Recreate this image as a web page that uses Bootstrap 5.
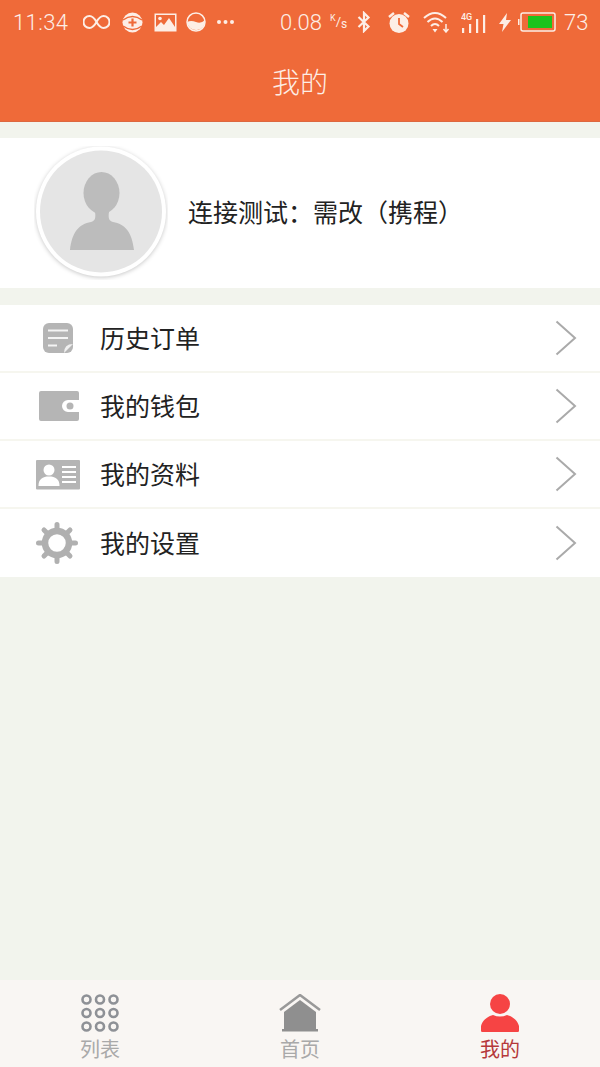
<!DOCTYPE html>
<html lang="zh-CN">
<head>
    <meta charset="UTF-8">
    <meta name="viewport" content="width=device-width, initial-scale=1.0">
    <title>我的</title>
    <link href="https://cdn.jsdelivr.net/npm/bootstrap@5.3.0/dist/css/bootstrap.min.css" rel="stylesheet" />
    <style>
        html, body { height: 100%; }
        body {
            background: #f2f4ed;
            font-family: "Noto Sans CJK SC", "Noto Sans", sans-serif;
            color: #222;
        }
        .app-shell { width: 600px; height: 1067px; overflow: hidden; }
        .app-top { height: 122px; background: #ef6a39; color: #fdeee6; border-bottom: 1px solid #dd6840; }
        .status-row { height: 44px; padding: 0 11px 0 13px; font-family: Roboto, "Liberation Sans", sans-serif; font-weight: 300; font-size: 22px; }
        .status-row svg { display: block; }
        .s-time { width: 58px; letter-spacing: .4px; white-space: nowrap; }
        .s-speed { width: 44px; white-space: nowrap; }
        .s-unit { font-size: 13px; width: 16px; margin-left: 6px; white-space: nowrap; font-weight: 400; line-height: 1; }
        .s-unit-k { font-size: 9px; vertical-align: 5px; }
        .s-unit-s { vertical-align: -2px; font-size: 12px; }
        .s-level { width: 25px; margin-left: 8px; }
        .m12 { margin-left: 12px; }
        .m11 { margin-left: 11px; }
        .m10 { margin-left: 10px; }
        .m9 { margin-left: 9px; }
        .m17 { margin-left: 17px; }
        .m13 { margin-left: 13px; }
        .m7 { margin-left: 7px; }
        .app-title { height: 74px; font-size: 28px; font-weight: 300; }
        .profile-box { height: 150px; margin-top: 16px; background: #fff; padding-left: 34px; }
        .avatar-ring { filter: drop-shadow(0 1px 2px rgba(0, 0, 0, .22)); }
        .profile-name { font-size: 25px; margin-left: 20px; margin-bottom: 3px; line-height: 1; }
        .menu-box { margin-top: 17px; }
        .menu-row { height: 68px; background: #fff; border-bottom: 2px solid #f6f6ef; padding-right: 23px; font-size: 25px; }
        .menu-row:last-child { border-bottom: 0; }
        .menu-ico { width: 100px; flex: 0 0 100px; }
        .menu-ico svg { display: block; margin-left: 35px; }
        .menu-ico-low { padding-top: 2px; }
        .tabs-box { height: 87px; margin-top: auto; background: #f9f6f3; }
        .tab-item { width: 200px; font-size: 20px; line-height: 1; color: #a9a9a9; }
        .tab-item svg { display: block; margin-bottom: 7px; }
        .tab-on { color: #b5383a; }
    </style>
</head>
<body>
    <div class="app-shell d-flex flex-column">
        <header class="app-top">
            <div class="status-row d-flex align-items-center justify-content-between">
                <div class="d-flex align-items-center">
                    <span class="s-time">11:34</span>
                    <svg class="m12" width="27" height="16" viewBox="0 0 27 16" fill="none" stroke="#fdeee6" stroke-width="2"><path d="M13.500 8C11 3.500 9 2 6.500 2a6 6 0 0 0 0 12c2.500 0 4.500-1.500 7-6s4.500-6 7-6a6 6 0 0 1 0 12c-2.500 0-4.500-1.500-7-6z"/></svg>
                    <svg class="m12" width="21" height="21" viewBox="0 0 21 21"><circle cx="10.500" cy="10.500" r="10" fill="#fdeee6"/><path d="M1 8q9.500-7 19 0M1 14q9.500 7 19 0" fill="none" stroke="#ef6a39" stroke-width="1.500"/><path d="M10.500 6.500v8M6.500 10.500h8" stroke="#ef6a39" stroke-width="2.200"/></svg>
                    <svg class="m11" width="23" height="19" viewBox="0 0 23 19"><rect x=".5" y=".5" width="22" height="18" fill="#fdeee6"/><rect x="2" y="2" width="19" height="12" fill="#ef6a39"/><path d="M2 14l5-5 3 3 5-7 6 9v2H2z" fill="#fdeee6"/><circle cx="6" cy="5.500" r="1.800" fill="#fdeee6"/></svg>
                    <svg class="m9" width="20" height="20" viewBox="0 0 20 20"><circle cx="10" cy="10" r="9" fill="none" stroke="#fdeee6" stroke-width="1.500"/><path d="M1 10q4-2 9 0t9-2a9 9 0 0 1-18 2z" fill="#fdeee6"/></svg>
                    <svg class="m10" width="19" height="6" viewBox="0 0 19 6" fill="#fdeee6"><circle cx="3" cy="3" r="2"/><circle cx="9.500" cy="3" r="2"/><circle cx="16" cy="3" r="2"/></svg>
                </div>
                <div class="d-flex align-items-center">
                    <span class="s-speed">0.08</span>
                    <span class="s-unit"><span class="s-unit-k">K</span>/<span class="s-unit-s">s</span></span>
                    <svg class="m11" width="14" height="22" viewBox="0 0 14 22" fill="none" stroke="#fdeee6" stroke-width="2.200"><path d="M1.500 6l10 9.500L7 20V2l4.500 4.500-10 9.500"/></svg>
                    <svg class="m17" width="22" height="23" viewBox="0 0 22 23"><circle cx="11" cy="12.500" r="9.500" fill="#fdeee6"/><path d="M11 7v6l4 3" fill="none" stroke="#ef6a39" stroke-width="1.800"/><path d="M1 6l5-4M21 6l-5-4" stroke="#fdeee6" stroke-width="2.500"/></svg>
                    <svg class="m13" width="27" height="22" viewBox="0 0 27 22" fill="none" stroke="#fdeee6" stroke-width="2"><path d="M1 7q11-10 22 0M4.500 11q7.500-7 15 0M8 15q4-4 8 0"/><path d="M9.500 18h5l-2.500 3.500z" fill="#fdeee6" stroke="none"/><path d="M23 13v7M20.500 18l2.500 3 2.500-3" stroke-width="1.500"/></svg>
                    <svg class="m11" width="29" height="24" viewBox="0 0 29 24" fill="#fdeee6"><rect x="1" y="18" width="2.200" height="5"/><rect x="8" y="14" width="2.200" height="9"/><rect x="15" y="9" width="2.200" height="14"/><rect x="22" y="5" width="2.200" height="18"/><text x="0" y="10" font-size="9" font-family="Roboto, sans-serif" font-weight="500">4G</text></svg>
                    <svg class="m9" width="12" height="19" viewBox="0 0 12 19" fill="#fdeee6"><path d="M8 0L0 11h4.500L3 19l9-12H7z"/></svg>
                    <svg class="m7" width="38" height="20" viewBox="0 0 38 20"><rect x="3" y="1" width="34" height="18" rx="2" fill="none" stroke="#fdeee6" stroke-width="1.500"/><rect x="0" y="7" width="1.500" height="6" fill="#fdeee6"/><rect x="10" y="4" width="24" height="12" fill="#1cc31c"/></svg>
                    <span class="s-level">73</span>
                </div>
            </div>
            <div class="app-title d-flex align-items-center justify-content-center">我的</div>
        </header>

        <section class="profile-box d-flex align-items-center">
            <svg width="134" height="134" viewBox="0 0 134 134">
                <circle class="avatar-ring" cx="67" cy="65.500" r="65" fill="#fff"/>
                <circle cx="67" cy="65.500" r="61" fill="#e5e5e5"/>
                <ellipse cx="67.500" cy="47" rx="18" ry="21" fill="#bcbcbc"/>
                <path d="M36 104c2-18 9-26 21-28 4-1 5-4 4-10h14c-1 6 0 9 4 10 12 2 19 10 21 28z" fill="#bcbcbc"/>
            </svg>
            <div class="profile-name">连接测试：需改（携程）</div>
        </section>

        <section class="menu-box">
            <div class="menu-row d-flex align-items-center">
                <div class="menu-ico">
                    <svg width="44" height="30" viewBox="0 0 44 30"><rect x="8" y="0" width="30" height="30" rx="6" fill="#b5b5b5"/><path d="M13 7.500h20M13 15h20M13 22.500h9" stroke="#f4f4f4" stroke-width="2"/><path d="M38 21l-9 9q0-9 9-9z" fill="#f0f0f0"/></svg>
                </div>
                <div class="flex-grow-1">历史订单</div>
                <svg width="22" height="36" viewBox="0 0 22 36" fill="none" stroke="#aaa" stroke-width="2"><path d="M1.500 1.500L20 18 1.500 34.500"/></svg>
            </div>
            <div class="menu-row d-flex align-items-center">
                <div class="menu-ico">
                    <svg width="44" height="32" viewBox="0 0 44 32"><path d="M6 1h36a2 2 0 0 1 2 2v7H33a6 6 0 0 0 0 12h11v7a2 2 0 0 1-2 2H6a2 2 0 0 1-2-2V3a2 2 0 0 1 2-2z" fill="#b5b5b5"/><circle cx="35" cy="16" r="3.500" fill="#b5b5b5"/></svg>
                </div>
                <div class="flex-grow-1">我的钱包</div>
                <svg width="22" height="36" viewBox="0 0 22 36" fill="none" stroke="#aaa" stroke-width="2"><path d="M1.500 1.500L20 18 1.500 34.500"/></svg>
            </div>
            <div class="menu-row d-flex align-items-center">
                <div class="menu-ico menu-ico-low">
                    <svg width="45" height="30" viewBox="0 0 45 30"><rect x="1" y="0" width="44" height="29.500" rx="1" fill="#b5b5b5"/><circle cx="14" cy="10" r="5.500" fill="#fff"/><path d="M3.500 26c0-7 4-9.500 10.500-9.500S24.500 19 24.500 26z" fill="#fff"/><path d="M27 7h14M27 12h14M27 17h14M27 22h14" stroke="#fff" stroke-width="2"/></svg>
                </div>
                <div class="flex-grow-1">我的资料</div>
                <svg width="22" height="36" viewBox="0 0 22 36" fill="none" stroke="#aaa" stroke-width="2"><path d="M1.500 1.500L20 18 1.500 34.500"/></svg>
            </div>
            <div class="menu-row d-flex align-items-center">
                <div class="menu-ico">
                    <svg width="44" height="44" viewBox="0 0 44 44" fill="none" stroke="#b0b0b0"><circle cx="22" cy="22" r="12" stroke-width="6.500"/><path d="M22 3.500v4M22 36.500v4M3.500 22h4M36.500 22h4M9 9l3 3M32 32l3 3M9 35l3-3M32 12l3-3" stroke-width="5" stroke-linecap="round"/></svg>
                </div>
                <div class="flex-grow-1">我的设置</div>
                <svg width="22" height="36" viewBox="0 0 22 36" fill="none" stroke="#aaa" stroke-width="2"><path d="M1.500 1.500L20 18 1.500 34.500"/></svg>
            </div>
        </section>

        <nav class="tabs-box d-flex">
            <div class="tab-item d-flex flex-column align-items-center justify-content-end pb-2">
                <svg width="38" height="38" viewBox="0 0 38 38" fill="none" stroke="#8e9196" stroke-width="2.600"><circle cx="5.500" cy="5.500" r="4"/><circle cx="19" cy="5.500" r="4"/><circle cx="32.500" cy="5.500" r="4"/><circle cx="5.500" cy="19" r="4"/><circle cx="19" cy="19" r="4"/><circle cx="32.500" cy="19" r="4"/><circle cx="5.500" cy="32.500" r="4"/><circle cx="19" cy="32.500" r="4"/><circle cx="32.500" cy="32.500" r="4"/></svg>
                <span>列表</span>
            </div>
            <div class="tab-item d-flex flex-column align-items-center justify-content-end pb-2">
                <svg width="42" height="38" viewBox="0 0 42 38"><path d="M1 16L21 1l20 15" fill="none" stroke="#999" stroke-width="2.500"/><path d="M21 6L5 18v17h32V18z" fill="#8f8f8f"/><rect x="3" y="35" width="36" height="2.500" fill="#8f8f8f"/></svg>
                <span>首页</span>
            </div>
            <div class="tab-item tab-on d-flex flex-column align-items-center justify-content-end pb-2">
                <svg width="38" height="38" viewBox="0 0 38 38" fill="#f64444"><circle cx="19" cy="10" r="10"/><path d="M1 38q-2-1-1-6c2-7 8-10 12-11q7 3 14 0c4 1 10 4 12 11q1 5-1 6z"/></svg>
                <span>我的</span>
            </div>
        </nav>
    </div>
    <script src="https://cdn.jsdelivr.net/npm/bootstrap@5.3.0/dist/js/bootstrap.bundle.min.js"></script>
</body>
</html>
